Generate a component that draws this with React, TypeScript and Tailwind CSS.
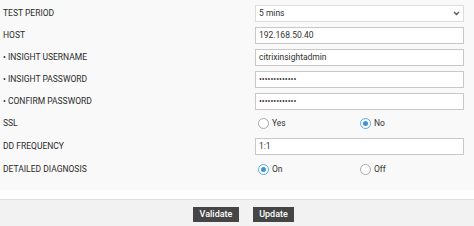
import { ReactNode } from "react";

const Row = ({ label, children, h = "h-[22px]" }: { label: string; children: ReactNode; h?: string }) => (
  <div className={`flex items-center ${h}`}>
    <div className="w-[255px] pl-[3px] text-[8.5px] text-[#2a2a2a] uppercase">{label}</div>
    <div className="w-[209px]">{children}</div>
  </div>
);

const TextBox = ({ value }: { value: string }) => (
  <div className="h-[17px] bg-white border border-[#c8c8c8] px-[3px] flex items-center text-[8.5px] text-[#333]">
    {value}
  </div>
);

const Radio = ({ label, checked }: { label: string; checked?: boolean }) => (
  <div className="w-[102px] flex items-center gap-[3px] pl-[3px] text-[8.5px] text-[#333]">
    <span
      className={`w-[11px] h-[11px] rounded-full bg-white border flex items-center justify-center ${
        checked ? "border-[#5ba8dd]" : "border-[#aaa]"
      }`}
    >
      {checked && <span className="w-[5px] h-[5px] rounded-full bg-[#3d95d3]" />}
    </span>
    {label}
  </div>
);

export default function App() {
  return (
    <div className="w-[474px] h-[226px] flex flex-col bg-white font-['Roboto',sans-serif]">
      <div className="h-[190px] bg-[#f9f9f9] pt-[2px] flex flex-col">
        <Row label="Test Period">
          <div className="h-[17px] bg-white border border-[#dcdcdc] px-[3px] flex items-center justify-between text-[8.5px] text-[#333]">
            <span>5 mins</span>
            <svg width="7" height="5" viewBox="0 0 7 5">
              <path d="M1 1l2.5 2.5L6 1" fill="none" stroke="#555" strokeWidth="1.3" />
            </svg>
          </div>
        </Row>
        <Row label="Host">
          <TextBox value="192.168.50.40" />
        </Row>
        <Row label="• Insight Username">
          <TextBox value="citrixinsightadmin" />
        </Row>
        <Row label="• Insight Password">
          <TextBox value="•••••••••••••" />
        </Row>
        <Row label="• Confirm Password">
          <TextBox value="•••••••••••••" />
        </Row>
        <Row label="SSL" h="h-[23px]">
          <div className="flex">
            <Radio label="Yes" />
            <Radio label="No" checked />
          </div>
        </Row>
        <Row label="DD Frequency" h="h-[23px]">
          <TextBox value="1:1" />
        </Row>
        <Row label="Detailed Diagnosis" h="h-[23px]">
          <div className="flex">
            <Radio label="On" checked />
            <Radio label="Off" />
          </div>
        </Row>
      </div>
      <div className="h-[10px] bg-white border-b border-[#dedede]" />
      <div className="flex-1 bg-[#f2f2f2] flex justify-center items-start pt-[7px] pl-[13px] gap-[14px]">
        <button className="h-[15px] w-[46px] bg-[#454545] text-white text-[9px] font-medium leading-none">Validate</button>
        <button className="h-[15px] w-[41px] bg-[#454545] text-white text-[9px] font-medium leading-none">Update</button>
      </div>
    </div>
  );
}
